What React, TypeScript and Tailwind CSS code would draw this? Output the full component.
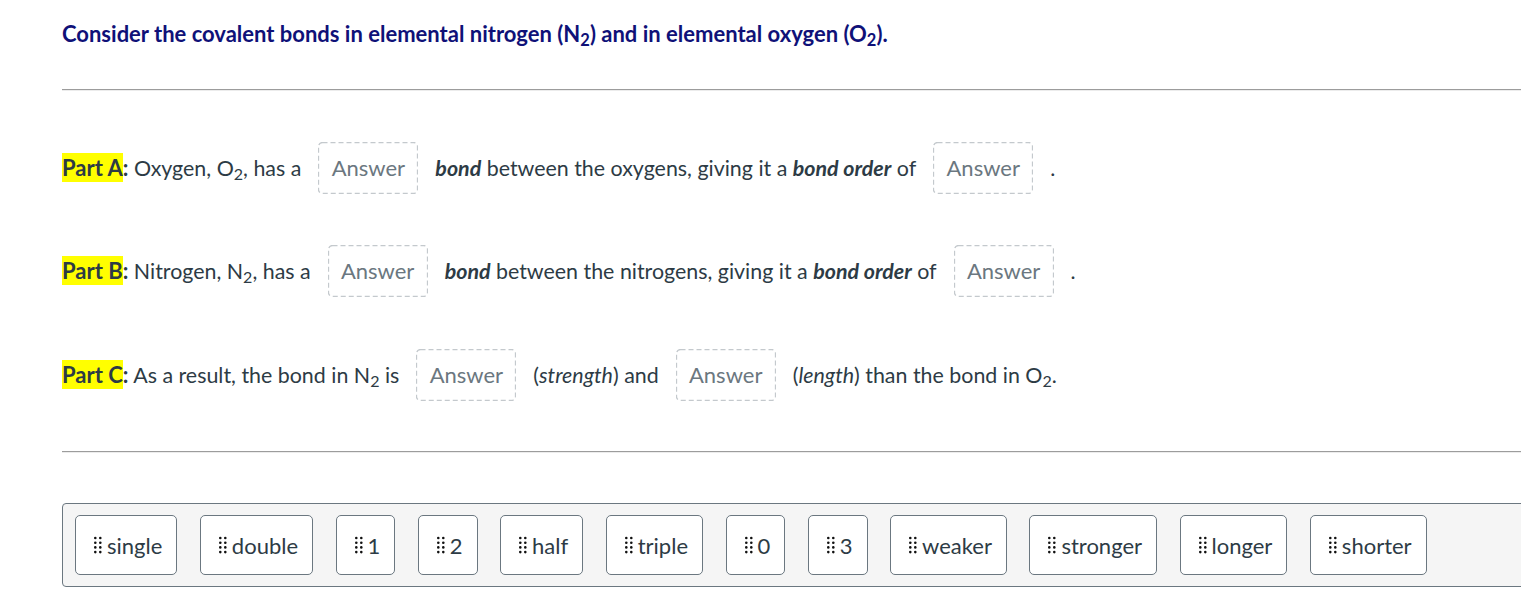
import React from 'react';

const font = { fontFamily: 'Lato, "Open Sans", sans-serif' };

function Answer() {
  return (
    <span className="relative mx-[17px] inline-flex h-[52px] w-[100px] shrink-0 items-center justify-center text-[22px] text-[#6b7780]">
      <svg className="pointer-events-none absolute inset-0" width="100" height="52" viewBox="0 0 100 52">
        <rect x="0.5" y="0.5" width="99" height="51" rx="4" fill="none" stroke="#c4c9cd" strokeWidth="1.3" strokeDasharray="5 3" />
      </svg>
      Answer
    </span>
  );
}

function Grip() {
  return (
    <svg width="8" height="18" viewBox="0 0 8 18" className="shrink-0">
      {[0, 1].map((c) =>
        [0, 1, 2, 3].map((r) => (
          <circle key={`${c}-${r}`} cx={1.3 + c * 5} cy={2 + r * 4.7} r="1.3" fill="#111" />
        ))
      )}
    </svg>
  );
}

function Tag({ label }: { label: string }) {
  return (
    <div className="flex h-[60px] shrink-0 items-center gap-[5px] rounded-[5px] border border-[#6b7780] bg-white pl-[18px] pr-[14px] text-[22px] text-[#2d3b45]">
      <Grip />
      <span>{label}</span>
    </div>
  );
}

function Part({ name }: { name: string }) {
  return (
    <span className="text-[22px] font-bold">
      <span className="bg-[#ffff00] py-[1px]">Part {name}</span>:
    </span>
  );
}

function Hr() {
  return <div className="h-[2px] border-t border-[#9c9c9c] border-b border-b-[#ececec]" />;
}

export default function App() {
  const tags = ['single', 'double', '1', '2', 'half', 'triple', '0', '3', 'weaker', 'stronger', 'longer', 'shorter'];
  return (
    <div className="h-[612px] w-[1521px] overflow-hidden bg-white pl-[62px] pt-[19px] text-[#2d3b45]" style={font}>
      <h1 className="text-[22px] font-bold leading-[30px] text-[#0f1178]">
        Consider the covalent bonds in elemental nitrogen (N<sub>2</sub>) and in elemental oxygen (O<sub>2</sub>).
      </h1>

      <div className="mt-[40px] w-[1480px]">
        <Hr />
      </div>

      {/* Part A */}
      <div className="mt-[51px] flex h-[52px] items-center text-[21.4px] leading-[28px] whitespace-pre">
        <Part name="A" />
        <span> Oxygen, O<sub>2</sub>, has a</span>
        <Answer />
        <span>
          <b className="italic">bond</b> between the oxygens, giving it a <b className="italic">bond order</b> of
        </span>
        <Answer />
        <span>.</span>
      </div>

      {/* Part B */}
      <div className="mt-[51px] flex h-[52px] items-center text-[21.4px] leading-[28px] whitespace-pre">
        <Part name="B" />
        <span> Nitrogen, N<sub>2</sub>, has a</span>
        <Answer />
        <span>
          <b className="italic">bond</b> between the nitrogens, giving it a <b className="italic">bond order</b> of
        </span>
        <Answer />
        <span>.</span>
      </div>

      {/* Part C */}
      <div className="mt-[52px] flex h-[52px] items-center text-[21.4px] leading-[28px] whitespace-pre">
        <Part name="C" />
        <span> As a result, the bond in N<sub>2</sub> is</span>
        <Answer />
        <span>
          (<i>strength</i>) and
        </span>
        <Answer />
        <span>
          (<i>length</i>) than the bond in O<sub>2</sub>.
        </span>
      </div>

      <div className="mt-[50px] w-[1480px]">
        <Hr />
      </div>

      <div className="mt-[50px] flex h-[84px] w-[1480px] items-center gap-[22.5px] rounded-[4px] border border-[#6b7780] bg-[#f5f5f5] px-[12px]">
        {tags.map((t) => (
          <Tag key={t} label={t} />
        ))}
      </div>
    </div>
  );
}
